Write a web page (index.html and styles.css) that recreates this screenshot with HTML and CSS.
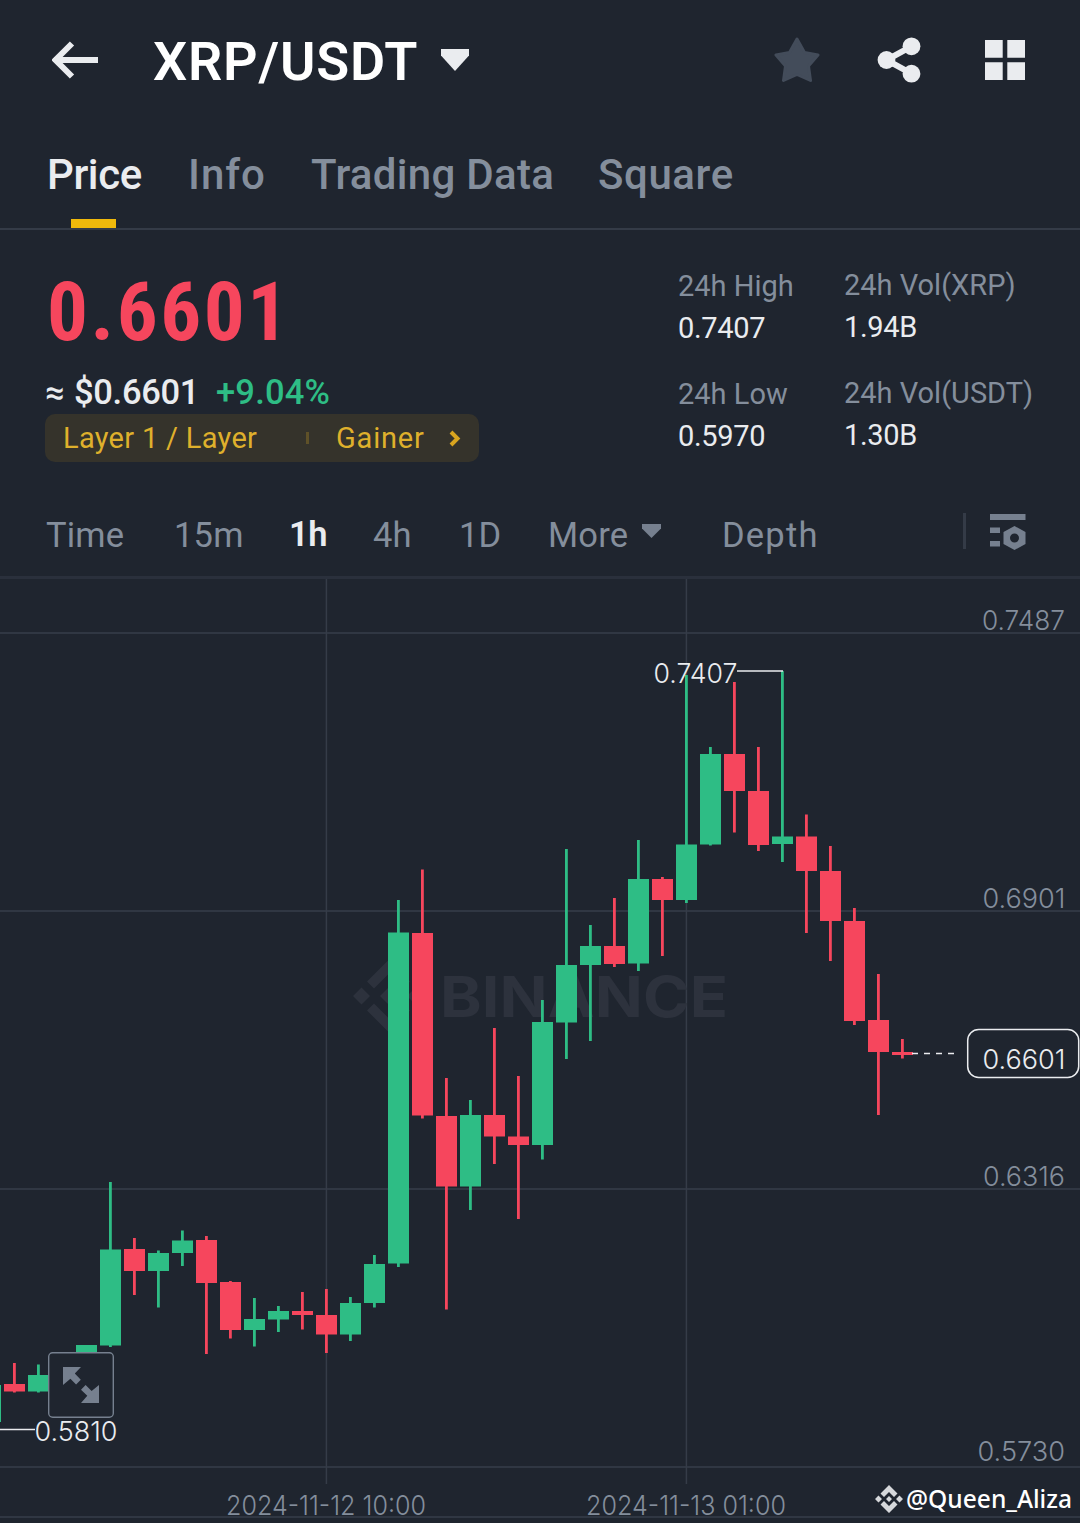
FILE: index.html
```html
<!DOCTYPE html>
<html lang="en">
<head>
    <meta charset="UTF-8">
    <title>XRP/USDT</title>
    <link rel="stylesheet" href="styles.css">
</head>
<body>
<header class="header">
    <svg class="back" width="46" height="38" viewBox="0 0 46 38"><path d="M20 2.5 3.5 19 20 35.5M4 19h42" fill="none" stroke="#eaecef" stroke-width="6"/></svg>
    <h1 class="pair">XRP/USDT</h1>
    <svg class="caret" width="28" height="22" viewBox="0 0 28 22"><path d="M0 0h28v6.500L14 22 0 6.500z" fill="#eaecef"/></svg>
    <div class="actions">
        <svg width="46" height="46" viewBox="0 0 46 46"><path d="M23 2l7.500 13.500L44 18l-9.500 11L36.500 43.500 23 37.500 9.500 43.500 11.500 29 2 18l13.500-2.500z" fill="#434c5a" stroke="#434c5a" stroke-width="3" stroke-linejoin="round"/></svg>
        <svg width="44" height="46" viewBox="0 0 44 46"><path d="M34.500 9.300 9.500 23l25 13.700" fill="none" stroke="#eaecef" stroke-width="6"/><g fill="#eaecef"><circle cx="34.500" cy="9.300" r="8.900"/><circle cx="9.500" cy="23" r="8.900"/><circle cx="34.500" cy="36.700" r="8.900"/></g></svg>
        <svg width="40" height="40" viewBox="0 0 40 40"><path d="M0 0h17.700v17.700H0zM22.300 0H40v17.700H22.300zM0 22.300h17.700V40H0zM22.300 22.300H40V40H22.300z" fill="#eaecef"/></svg>
    </div>
</header>

<nav class="tabs">
    <a class="tab active">Price</a>
    <a class="tab info">Info</a>
    <a class="tab trading">Trading Data</a>
    <a class="tab square">Square</a>
</nav>

<section class="ticker">
    <div class="quote">
        <div class="price">0.6601</div>
        <div class="fiat"><span class="approx">≈</span><span class="usd">$0.6601</span><span class="change">+9.04%</span></div>
        <div class="tags">
            <span class="layer">Layer 1 / Layer</span>
            <i class="tag-sep"></i>
            <span class="gainer">Gainer</span>
            <svg width="12" height="17" viewBox="0 0 12 17"><path d="M2 2l6.500 6.500L2 15" fill="none" stroke="#d9a51f" stroke-width="4"/></svg>
        </div>
    </div>
    <dl class="stats">
        <dt>24h High</dt>
        <dd>0.7407</dd>
        <dt>24h Low</dt>
        <dd>0.5970</dd>
    </dl>
    <dl class="stats volume">
        <dt>24h Vol(XRP)</dt>
        <dd>1.94B</dd>
        <dt>24h Vol(USDT)</dt>
        <dd>1.30B</dd>
    </dl>
</section>

<div class="intervals">
    <span>Time</span>
    <span>15m</span>
    <span class="active">1h</span>
    <span>4h</span>
    <span>1D</span>
    <span>More</span>
    <svg class="more-caret" width="20" height="14" viewBox="0 0 20 14"><path d="M0 0h19v4.500L9.500 14 0 4.500z" fill="#76808f"/></svg>
    <span class="depth">Depth</span>
    <i class="bar-sep"></i>
    <svg class="settings" width="36" height="36" viewBox="0 0 36 36"><path d="M0 0h35.500v6H0zM0 13.500h10v5.500H0zM0 27h10v5.500H0z" fill="#76808f"/><path fill-rule="evenodd" d="M24.500 12 35.500 18v12l-11 6-11-6V18zM24.500 19.500a4.500 4.500 0 1 0 0 9 4.500 4.500 0 0 0 0-9z" fill="#76808f"/></svg>
</div>

<svg class="chart" width="1080" height="944" viewBox="0 579 1080 944">
    <g class="grid">
        <path d="M0 633H1080M0 911H1080M0 1189H1080M0 1467H1080M0 1517H1080"/>
        <path class="thin" d="M326.400 579V1484M686.400 579V1484"/>
    </g>
    <g class="brand">
        <path d="M353 996l8.500-8.500 8.500 8.500-8.500 8.500zM380 996l8.500-8.500 8.500 8.500-8.500 8.500zM407 996l8.500-8.500 8.500 8.500-8.500 8.500zM367 981.500l21.500-21.500L410 981.500l-7 7-14.500-14.500-14.500 14.500zM367 1010.500l21.500 21.500 21.500-21.500-7-7-14.500 14.500-14.500-14.500z"/>
        <text x="440" y="1017" textLength="288" lengthAdjust="spacingAndGlyphs">BINANCE</text>
    </g>
    <g id="candles"></g>
    <g class="axis">
        <text x="982" y="630" textLength="83" lengthAdjust="spacingAndGlyphs">0.7487</text>
        <text x="982.500" y="908" textLength="83" lengthAdjust="spacingAndGlyphs">0.6901</text>
        <text x="983" y="1186" textLength="82" lengthAdjust="spacingAndGlyphs">0.6316</text>
        <text x="977.500" y="1461" textLength="87.500" lengthAdjust="spacingAndGlyphs">0.5730</text>
        <text x="226" y="1515" textLength="200" lengthAdjust="spacingAndGlyphs">2024-11-12 10:00</text>
        <text x="586" y="1515" textLength="200" lengthAdjust="spacingAndGlyphs">2024-11-13 01:00</text>
    </g>
    <g class="marks">
        <path d="M737 671H783M0 1429.500H35"/>
        <path d="M912 1053.500H956" stroke-dasharray="6 6"/>
        <rect x="967.700" y="1029.500" width="111" height="48" rx="11"/>
        <text x="653.500" y="683" textLength="84" lengthAdjust="spacingAndGlyphs">0.7407</text>
        <text x="34.500" y="1441" textLength="83" lengthAdjust="spacingAndGlyphs">0.5810</text>
        <text x="982.500" y="1069" textLength="83" lengthAdjust="spacingAndGlyphs">0.6601</text>
    </g>
    <g class="expand">
        <rect x="48.700" y="1352.700" width="64.600" height="64.600" rx="4"/>
        <path d="M63 1367h18l-6.200 6.500 6 6.200-4.700 4.700-5.700-5.700-7.400 6.300zM99 1403H81l6.300-7.300-6.300-6 4.600-4.700 6 6 7.400-6z"/>
    </g>
    <g class="handle">
        <path d="M875 1499l3.500-3.500 3.500 3.500-3.500 3.500zM886 1499l3-3 3 3-3 3zM896 1499l3.500-3.500 3.500 3.500-3.500 3.500zM880.500 1493.500l8.500-8.500 8.500 8.500-3.500 3.500-5-5-5 5zM880.500 1504.500l8.500 8.500 8.500-8.500-3.500-3.500-5 5-5-5z"/>
        <text x="906" y="1508" textLength="166" lengthAdjust="spacingAndGlyphs">@Queen_Aliza</text>
    </g>
</svg>
<script src="chart.js"></script>
</body>
</html>
```

FILE: styles.css
```css
body { margin: 0; background: #1f252f; color: #eaecef; font-family: Roboto, "Liberation Sans", sans-serif; width: 1080px; }
svg { display: block; }

.header { display: flex; align-items: center; height: 124px; padding: 0 55px 0 52px; box-sizing: border-box; }
.header .back { margin-top: -4px; }
.pair { margin: 0 0 0 55px; width: 288px; font-size: 54px; line-height: 60px; font-weight: 600; color: #fff; letter-spacing: 0.8px; }
.header .caret { margin-top: -4px; }
.actions { display: flex; align-items: center; margin-left: auto; margin-top: -4px; }
.actions svg + svg { margin-left: 57px; }
.actions svg:last-child { margin-left: 64px; }

.tabs { display: grid; grid-template-columns: 141px 123px 287px 200px; padding-left: 47px; height: 104px; border-bottom: 2px solid #343b47; }
.tab { position: relative; font-size: 42px; line-height: 102px; font-weight: 500; color: #848e9c; white-space: nowrap; letter-spacing: 0.3px; }
.tab.active { color: #eaecef; letter-spacing: -0.4px; }
.tab.info { letter-spacing: 1px; }
.tab.square { letter-spacing: 0.6px; }
.tab.active::after { content: ""; position: absolute; left: 24px; bottom: 0; width: 45px; height: 9px; background: #f0b90b; }

.ticker { display: flex; height: 264px; padding-left: 45px; }
.quote { width: 633px; padding-top: 40px; }
.price { padding-left: 2px; font-size: 81px; line-height: 85px; font-weight: 700; font-stretch: 75%; letter-spacing: 2.6px; color: #f6465d; }
.fiat { display: flex; margin-top: 15px; font-size: 34.5px; line-height: 44px; font-weight: 500; }
.approx { width: 29px; font-size: 34px; }
.usd { width: 142px; letter-spacing: -0.3px; }
.change { color: #2ebd85; letter-spacing: 0.2px; }
.tags { display: flex; align-items: center; width: 434px; height: 48px; padding: 0 18px; box-sizing: border-box; border-radius: 10px; background: #35332b; color: #dfb02c; font-size: 29px; line-height: 50px; }
.layer { width: 243px; white-space: nowrap; letter-spacing: 0.3px; }
.tag-sep { width: 3px; height: 12px; background: #5f5128; }
.gainer { width: 113px; margin-left: 27px; letter-spacing: 0.8px; }

.stats { width: 166px; margin: 35px 0 0; font-size: 29px; line-height: 42px; white-space: nowrap; }
.stats.volume { width: 220px; margin-top: 34px; }
.stats dt { color: #848e9c; }
.stats dd { margin: 0 0 24px; letter-spacing: -0.3px; }

.intervals { display: grid; grid-template-columns: 128px 116px 83px 86px 89px 94px 80px 241px 27px 60px; padding-left: 46px; height: 82px; border-bottom: 3px solid #2a303c; font-size: 34.5px; line-height: 82px; color: #848e9c; letter-spacing: 0.2px; }
.intervals .active { margin-left: -1px; color: #eaecef; font-weight: 600; line-height: 80px; letter-spacing: -0.5px; }
.intervals .depth { letter-spacing: 1.2px; }
.more-caret { margin-top: 30px; }
.bar-sep { width: 3px; height: 36px; margin-top: 19px; background: #343b47; }
.settings { margin-top: 20px; }

.grid path { fill: none; stroke: #303743; stroke-width: 2; }
.grid .thin { stroke: #353c48; stroke-width: 1.5; }
.brand { fill: #2d323d; font: 700 57px Inter, sans-serif; }
.up { fill: #2ebd85; }
.down { fill: #f6465d; }
.axis, .marks { font: 300 27px Inter, "Liberation Sans", sans-serif; }
.axis { fill: #848e9c; }
.marks { fill: #eaecef; }
.marks path, .marks rect { fill: none; stroke: #eaecef; stroke-width: 1.5; }
.expand rect { fill: #1f252f; stroke: #76808f; stroke-width: 1.4; }
.expand path { fill: #76808f; }
.handle { fill: #fff; font: 500 26px "Noto Sans", sans-serif; }
.handle path { fill: #d6d8db; }
```

FILE: chart.js
```js
// direction, wick top, wick bottom, body top, body bottom
const candles = [
    ['up', 1385, 1422, 1385, 1422],
    ['down', 1363, 1392.5, 1384, 1391.5],
    ['up', 1364.5, 1392.5, 1375, 1391.5],
    ['up', 1353, 1375, 1353, 1375],
    ['up', 1345, 1353, 1345, 1353],
    ['up', 1182, 1347, 1249.5, 1345.5],
    ['down', 1238, 1295, 1249, 1271],
    ['up', 1250.5, 1307.5, 1253, 1271],
    ['up', 1230.5, 1266, 1240.5, 1253],
    ['down', 1236, 1354, 1240, 1283],
    ['down', 1281, 1338.5, 1282, 1330],
    ['up', 1298, 1346.5, 1319, 1330],
    ['up', 1306, 1332, 1311, 1319.5],
    ['down', 1292, 1329.5, 1311, 1315],
    ['down', 1289, 1353, 1315, 1334.5],
    ['up', 1297, 1341, 1303, 1334.5],
    ['up', 1255, 1307.5, 1264, 1303],
    ['up', 900, 1267, 932.5, 1263.5],
    ['down', 869.5, 1118.5, 933, 1115.5],
    ['down', 1078, 1309.5, 1116, 1186.5],
    ['up', 1100, 1210, 1115, 1186.5],
    ['down', 1028, 1164, 1115, 1136.5],
    ['down', 1076, 1219, 1136.5, 1145],
    ['up', 1000, 1159.5, 1022, 1145],
    ['up', 849, 1059, 965, 1022.5],
    ['up', 925, 1041, 946, 965],
    ['down', 898, 967, 946, 964],
    ['up', 840, 971, 879, 963.5],
    ['down', 877, 956, 879, 900],
    ['up', 675, 903, 844.5, 900],
    ['up', 747, 845.5, 754, 844.5],
    ['down', 682, 832.5, 754, 791],
    ['down', 747, 851, 791, 845],
    ['up', 671, 862, 836.5, 844],
    ['down', 814.5, 933, 836.5, 871],
    ['down', 846, 961, 871, 921],
    ['down', 908, 1025, 921, 1021],
    ['down', 974, 1115, 1020, 1052],
    ['down', 1039, 1058.5, 1052, 1055]
];

document.getElementById('candles').innerHTML = candles.map(([dir, high, low, top, bottom], i) => {
    const x = i * 24 - 20;
    return `<g class="${dir}"><rect x="${x + 9}" y="${high}" width="2.8" height="${low - high}"/>` +
        `<rect x="${x}" y="${top}" width="21" height="${bottom - top}"/></g>`;
}).join('');
```
